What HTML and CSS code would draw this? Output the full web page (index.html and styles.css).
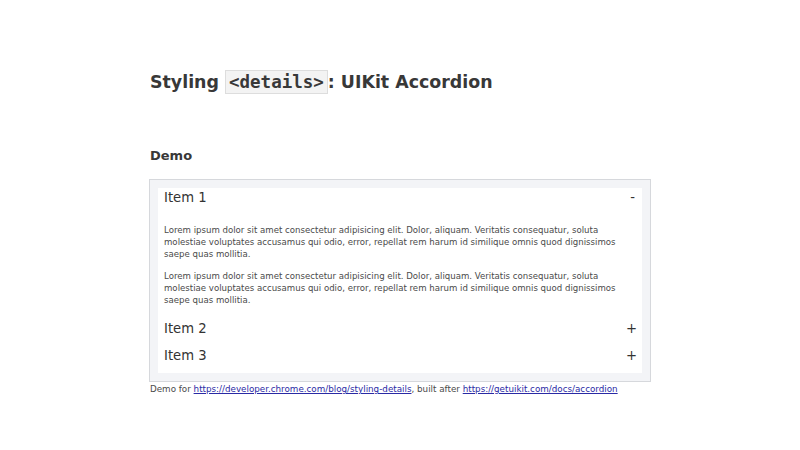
FILE: index.html
```html
<!DOCTYPE html>
<html lang="en">
<head>
<meta charset="utf-8">
<title>Styling details: UIKit Accordion</title>
<link rel="stylesheet" href="styles.css">
</head>
<body>
<main class="page">
  <h1 class="title">Styling <code class="tag">&lt;details&gt;</code>: UIKit Accordion</h1>
  <h2 class="section">Demo</h2>
  <div class="demo">
    <div class="accordion">
      <details class="item" open>
        <summary class="item-title">Item 1</summary>
        <div class="item-content">
          <p>Lorem ipsum dolor sit amet consectetur adipisicing elit. Dolor, aliquam. Veritatis consequatur, soluta molestiae voluptates accusamus qui odio, error, repellat rem harum id similique omnis quod dignissimos saepe quas mollitia.</p>
          <p>Lorem ipsum dolor sit amet consectetur adipisicing elit. Dolor, aliquam. Veritatis consequatur, soluta molestiae voluptates accusamus qui odio, error, repellat rem harum id similique omnis quod dignissimos saepe quas mollitia.</p>
        </div>
      </details>
      <details class="item">
        <summary class="item-title">Item 2</summary>
        <div class="item-content"><p>Lorem ipsum dolor sit amet consectetur adipisicing elit.</p></div>
      </details>
      <details class="item">
        <summary class="item-title">Item 3</summary>
        <div class="item-content"><p>Lorem ipsum dolor sit amet consectetur adipisicing elit.</p></div>
      </details>
    </div>
  </div>
  <p class="credits">Demo for <a href="https://developer.chrome.com/blog/styling-details">https://developer.chrome.com/blog/styling-details</a>, built after <a href="https://getuikit.com/docs/accordion">https://getuikit.com/docs/accordion</a></p>
</main>
</body>
</html>
```
FILE: styles.css
```css
html, body {
  margin: 0;
  background: #fff;
}

body {
  font-family: "DejaVu Sans", sans-serif;
  color: #333;
}

.page {
  width: 500px;
  margin: 0 auto;
  padding-top: 70px;
}

.title {
  margin: 0;
  font-size: 17.4px;
  line-height: 24px;
  font-weight: bold;
  color: #383838;
}

.tag {
  font-family: "DejaVu Sans Mono", monospace;
  font-weight: bold;
  font-size: 17.5px;
  background: #f3f3f3;
  border: 1px solid #ddd;
  padding: 1px 3px;
  color: #383838;
}

.section {
  margin: 52px 0 0;
  font-size: 13px;
  line-height: 20px;
  font-weight: bold;
  color: #383838;
}

.demo {
  margin: 13px -1px 0;
  border: 1px solid #d6d8dc;
  background: #f3f4f7;
  padding: 8px;
}

.accordion {
  background: #fff;
  padding: 1px 5px 8px 6px;
}

.item + .item {
  margin-top: 9px;
}

.item-title {
  display: flex;
  justify-content: space-between;
  list-style: none;
  font-size: 13.2px;
  line-height: 18px;
  color: #333;
  cursor: pointer;
}

.item-title::-webkit-details-marker {
  display: none;
}

.item-title::after {
  content: "+";
}

.item[open] > .item-title::after {
  content: "-";
  padding-right: 2px;
}

.item-content {
  padding: 17px 8px 5px 0;
}

.item-content p {
  margin: 0 0 10px;
  font-size: 8.6px;
  line-height: 12px;
  color: #4a4a4a;
}

.item-content p:last-child {
  margin-bottom: 0;
}

.credits {
  margin: 0;
  font-size: 8.75px;
  line-height: 12px;
  color: #4a4a4a;
  padding-top: 1px;
}

.credits a {
  color: #2a2aa5;
}
```
